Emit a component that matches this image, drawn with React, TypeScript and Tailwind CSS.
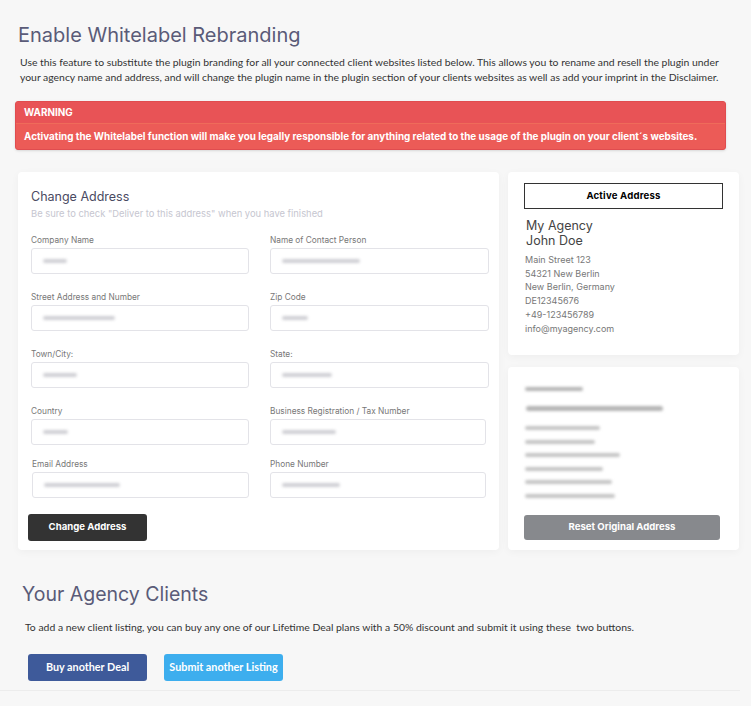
const fields = [
  { left: "Company Name", leftBlur: 24, right: "Name of Contact Person", rightBlur: 78 },
  { left: "Street Address and Number", leftBlur: 72, right: "Zip Code", rightBlur: 26 },
  { left: "Town/City:", leftBlur: 34, right: "State:", rightBlur: 50 },
  { left: "Country", leftBlur: 25, right: "Business Registration / Tax Number", rightBlur: 54, rightNarrow: true },
  { left: "Email Address", leftBlur: 76, right: "Phone Number", rightBlur: 58, leftShift: true, rightNarrow: true, tight: true },
];

const address = [
  "Main Street 123",
  "54321 New Berlin",
  "New Berlin, Germany",
  "DE12345676",
  "+49-123456789",
  "info@myagency.com",
];

const blurredLines = [75, 70, 95, 78, 87, 90];

function Field({ label, blur, narrow, shift, tight }: { label: string; blur: number; narrow?: boolean; shift?: boolean; tight?: boolean }) {
  return (
    <div className={`${shift ? "pl-[1px]" : ""} ${tight ? "-mt-[4px]" : ""}`}>
      <p className="text-[8.3px] leading-[10px] text-[#777]">{label}</p>
      <div
        className={`mt-[3px] flex h-[26px] items-center rounded-[3px] border border-[#e3e3e8] bg-white px-[11px] ${narrow ? "w-[216px]" : "w-full"}`}
      >
        <span className="h-[4px] rounded-full bg-[#cfcfd4] blur-[1.5px]" style={{ width: blur }} />
      </div>
    </div>
  );
}

export default function App() {
  return (
    <div className="min-h-[706px] bg-[#f7f7f7] pt-[23px] font-['Inter',sans-serif]">
      <h1 className="pl-[18px] text-[20px] leading-[24px] text-[#5a5b78]">Enable Whitelabel Rebranding</h1>
      <p className="mt-[8px] pl-[20px] pr-[20px] font-['Lato',sans-serif] text-[10.4px] leading-[15px] text-[#333]">
        Use this feature to substitute the plugin branding for all your connected client websites listed below. This allows you to rename and resell the plugin under your agency name and address, and will change the plugin name in the plugin section of your clients websites as well as add your imprint in the Disclaimer.
      </p>

      <div className="ml-[15px] mr-[25px] mt-[16px] overflow-hidden rounded-[3px] border border-[#e04c4f] bg-[#ec5b57] shadow-sm">
        <div className="flex h-[21px] items-center bg-[#e85356] px-[8px] text-[9.9px] font-bold text-white">WARNING</div>
        <div className="flex h-[26px] items-center border-t border-[#ef6b5a] px-[8px] text-[9.9px] font-bold text-white">
          Activating the Whitelabel function will make you legally responsible for anything related to the usage of the plugin on your client´s websites.
        </div>
      </div>

      <div className="ml-[18px] mr-[12px] mt-[22px] flex gap-[9px]">
        <div className="h-[378px] w-[481px] rounded-[4px] bg-white pl-[13px] pr-[10px] pt-[17px] shadow-[0_2px_8px_rgba(0,0,0,0.04)]">
          <h2 className="text-[12.5px] leading-[16px] text-[#4a4a62]">Change Address</h2>
          <p className="mt-[3px] text-[9.4px] leading-[12px] text-[#c6c6d0]">Be sure to check "Deliver to this address" when you have finished</p>
          <div className="mt-[15px] grid grid-cols-[218px_219px] gap-x-[21px] gap-y-[18px]">
            {fields.map((row) => (
              <>
                <Field key={row.left} label={row.left} blur={row.leftBlur} shift={row.leftShift} tight={row.tight} />
                <Field key={row.right} label={row.right} blur={row.rightBlur} narrow={row.rightNarrow} tight={row.tight} />
              </>
            ))}
          </div>
          <button className="-ml-[3px] mt-[16px] h-[27px] w-[119px] rounded-[3px] bg-[#333333] text-[9.6px] font-bold text-white">Change Address</button>
        </div>

        <div className="flex w-[231px] flex-col gap-[12px]">
          <div className="h-[183px] rounded-[4px] bg-white px-[16px] pt-[11px] shadow-[0_2px_8px_rgba(0,0,0,0.04)]">
            <div className="flex h-[26px] items-center justify-center border border-[#333] text-[9.6px] font-bold tracking-[0.2px] text-black">Active Address</div>
            <p className="mt-[9px] pl-[2px] text-[12.5px] leading-[15px] text-[#444]">My Agency</p>
            <p className="pl-[2px] text-[12.5px] leading-[15px] text-[#444]">John Doe</p>
            <div className="mt-[5px] pl-[1px] text-[9px] leading-[13.7px] text-[#777]">
              {address.map((line) => (
                <p key={line}>{line}</p>
              ))}
            </div>
          </div>
          <div className="flex h-[183px] flex-col rounded-[4px] bg-white px-[16px] pt-[20px] shadow-[0_2px_8px_rgba(0,0,0,0.04)]">
            <span className="ml-[1px] h-[4px] w-[58px] rounded-full bg-[#b4b4b4] blur-[1.5px]" />
            <span className="ml-[2px] mt-[15px] h-[5px] w-[137px] rounded-full bg-[#b4b4b4] blur-[1.5px]" />
            <div className="mt-[15px] flex flex-col gap-[9.6px] pl-[1px]">
              {blurredLines.map((w, i) => (
                <span key={i} className="h-[4px] rounded-full bg-[#c4c4c4] blur-[1.5px]" style={{ width: w }} />
              ))}
            </div>
            <button className="mb-[10px] mt-auto h-[25px] w-[196px] rounded-[3px] bg-[#87898d] text-[9.6px] font-bold text-white">Reset Original Address</button>
          </div>
        </div>
      </div>

      <h2 className="mt-[32px] pl-[22px] text-[19.5px] leading-[24px] text-[#5a5b78]">Your Agency Clients</h2>
      <p className="mt-[15px] pl-[25px] font-['Lato',sans-serif] text-[10.4px] leading-[13px] text-[#333]">
        To add a new client listing, you can buy any one of our Lifetime Deal plans with a 50% discount and submit it using these&nbsp; two buttons.
      </p>
      <div className="mt-[20px] flex gap-[17px] pl-[28px]">
        <button className="h-[27px] w-[119px] rounded-[3px] bg-[#3e5a9a] font-['Lato',sans-serif] text-[10.8px] font-bold text-white">Buy another Deal</button>
        <button className="h-[27px] w-[119px] rounded-[3px] bg-[#3daeee] font-['Lato',sans-serif] text-[10.8px] font-bold text-white">Submit another Listing</button>
      </div>
      <div className="mr-[11px] mt-[9px] border-t border-[#ececec]" />
    </div>
  );
}
